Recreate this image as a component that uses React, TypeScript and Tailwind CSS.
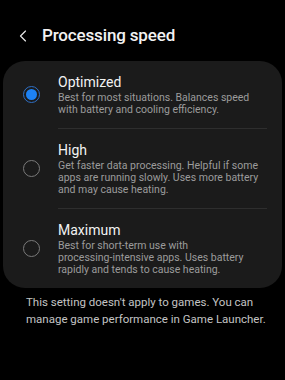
import { ChevronLeft } from "lucide-react";

type Option = {
    title: string;
    desc: string;
};

const options: Option[] = [
    {
        title: "Optimized",
        desc: "Best for most situations. Balances speed with battery and cooling efficiency.",
    },
    {
        title: "High",
        desc: "Get faster data processing. Helpful if some apps are running slowly. Uses more battery and may cause heating.",
    },
    {
        title: "Maximum",
        desc: "Best for short-term use with processing\u2011intensive apps. Uses battery rapidly and tends to cause heating.",
    },
];

function Radio({ checked }: { checked: boolean }) {
    if (checked) {
        return (
            <div className="flex h-[17px] w-[17px] items-center justify-center rounded-full border-[1.5px] border-[#2f6fc4]">
                <div className="h-[11px] w-[11px] rounded-full bg-[#1d82f5]" />
            </div>
        );
    }
    return <div className="h-[17px] w-[17px] rounded-full border-[1.5px] border-[#7a7a7a]" />;
}

export default function App() {
    const selected = 0;
    return (
        <div
            className="h-[380px] w-[285px] overflow-hidden bg-black"
            style={{ fontFamily: "Roboto, 'Noto Sans', sans-serif" }}
        >
            <header className="flex h-[61px] items-center pl-[13px] pt-[10px]">
                <ChevronLeft className="h-[20px] w-[20px] text-[#e8e8e8]" strokeWidth={1.4} />
                <h1 className="ml-[9px] text-[17px] font-medium tracking-[-0.15px] text-[#f2f2f2]">
                    Processing speed
                </h1>
            </header>

            <div className="mx-[3px] rounded-[22px] bg-[#1b1b1b]">
                {options.map((opt, i) => (
                    <div key={opt.title}>
                        {i > 0 && <div className="ml-[55px] mr-[15px] h-px bg-[#2e2e2e]" />}
                        <div className="flex items-center py-[12px]">
                            <div className="flex w-[55px] shrink-0 justify-center pl-[1px]">
                                <Radio checked={i === selected} />
                            </div>
                            <div className="pr-[18px]">
                                <div className="text-[14px] leading-[19px] text-[#f2f2f2]">{opt.title}</div>
                                <p className="text-[10.5px] leading-[12px] text-[#9b9b9b]">{opt.desc}</p>
                            </div>
                        </div>
                    </div>
                ))}
            </div>

            <p className="pl-[26px] pr-[14px] pt-[6px] text-[11.5px] leading-[17px] text-[#c4c4c4]">
                This setting doesn't apply to games. You can manage game performance in Game Launcher.
            </p>
        </div>
    );
}
